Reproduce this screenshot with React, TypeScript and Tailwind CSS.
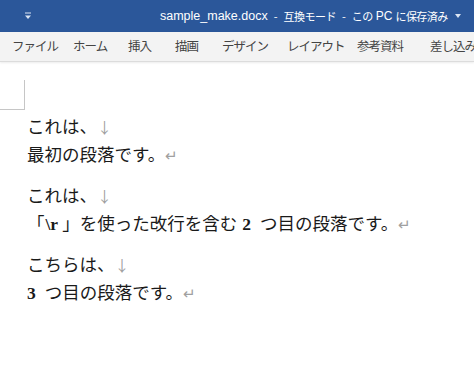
const tabs: [string, string][] = [
  ["ファイル", "w-[61px]"],
  ["ホーム", "w-[55px]"],
  ["挿入", "w-[47px]"],
  ["描画", "w-[47px]"],
  ["デザイン", "w-[65px]"],
  ["レイアウト", "w-[70px]"],
  ["参考資料", "w-[73px]"],
  ["差し込み文書", "w-[80px]"],
]

const body = "font-['Liberation_Serif','Noto_Sans_CJK_JP',serif]"

function Mark({ c }: { c: string }) {
  return <span className="text-[#a0a0a0] font-['Noto_Sans_CJK_JP',sans-serif] text-[15px]">{c}</span>
}

export default function App() {
  return (
    <div className="w-[474px] h-[366px] overflow-hidden bg-white flex flex-col">
      <div className="h-8 bg-[#2b579a] flex items-center text-white text-[11px] font-['Noto_Sans_CJK_JP',sans-serif] shrink-0">
        <div className="w-[160px] shrink-0 pl-[23px] flex">
          <svg width="10" height="10" viewBox="0 0 10 10">
            <line x1="2" y1="2" x2="8" y2="2" stroke="#dbe5f3" strokeWidth="1" />
            <path d="M2 4.5 L8 4.5 L5 8 Z" fill="#dbe5f3" />
          </svg>
        </div>
        <div className="whitespace-nowrap flex items-center">
          <span className="font-['Liberation_Sans','Noto_Sans_CJK_JP',sans-serif] text-[12.5px]">sample_make.docx</span>
          <span className="mx-[6px]">-</span>
          <span className="tracking-[-0.5px]">互換モード</span>
          <span className="mx-[6px]">-</span>
          <span className="tracking-[-0.5px]">この</span>
          <span className="ml-[3px] font-['Liberation_Sans',sans-serif] text-[12px]">PC</span>
          <span className="ml-[3px] tracking-[-0.6px]">に保存済み</span>
          <svg className="ml-[6px]" width="8" height="6" viewBox="0 0 8 6">
            <path d="M1 1 L7 1 L4 5 Z" fill="#dbe5f3" />
          </svg>
        </div>
      </div>
      <div className="h-[30px] bg-[#f3f3f3] border-b border-[#dcdcdc] shadow-[0_1px_2px_rgba(0,0,0,0.08)] flex items-center pl-[12px] text-[12.5px] tracking-[-1px] text-[#444] font-['Noto_Sans_CJK_JP',sans-serif] whitespace-nowrap shrink-0">
        {tabs.map(([t, w]) => (
          <span key={t} className={`${w} shrink-0`}>{t}</span>
        ))}
      </div>
      <div className="relative flex-1">
        <div className="absolute left-0 top-[18px] w-[25px] h-[30px] border-r border-b border-[#c6c6c6]" />
        <div className={`pt-[51px] pl-[27px] text-[17.5px] leading-[28px] text-[#1a1a1a] whitespace-nowrap ${body}`}>
          <p>これは、<Mark c="↓" /></p>
          <p>最初の段落です。<Mark c="↵" /></p>
          <p className="mt-[13px]">これは、<Mark c="↓" /></p>
          <p>
            「<b className="pl-[1px] pr-[4px]">\r</b>」を使った改行を含む<b className="ml-[5px] mr-[9px]">2</b>つ目の段落です。<Mark c="↵" />
          </p>
          <p className="mt-[13px]">こちらは、<Mark c="↓" /></p>
          <p><b className="mr-[9px]">3</b>つ目の段落です。<Mark c="↵" /></p>
        </div>
      </div>
    </div>
  )
}
